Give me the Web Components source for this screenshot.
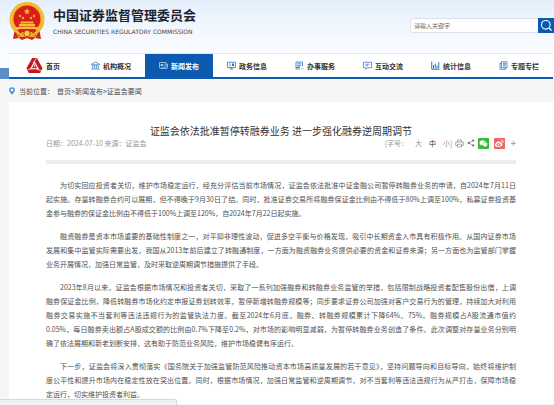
<!DOCTYPE html>
<html lang="zh-CN">
<head>
<meta charset="utf-8">
<title>证监会要闻</title>
<style>
    * { box-sizing: border-box; }
    body {
        margin: 0;
        min-height: 100vh;
        background: #f6f6f6;
        color: #505050;
        font: 7px/14px "Noto Sans CJK SC", "Noto Sans", sans-serif;
    }
</style>
</head>
<body>
<site-header></site-header>
<site-nav></site-nav>
<bread-crumb></bread-crumb>
<news-article>
    <span slot="title">证监会依法批准暂停转融券业务 进一步强化融券逆周期调节</span>
    <span slot="meta">日期：2024-07-10 来源：证监会</span>
    <article-paragraph>为切实回应投资者关切，维护市场稳定运行，经充分评估当前市场情况，证监会依法批准中证金融公司暂停转融券业务的申请，自2024年7月11日<br>起实施。存量转融券合约可以展期，但不得晚于9月30日了结。同时，批准证券交易所将融券保证金比例由不得低于80%上调至100%，私募证券投资基<br>金参与融券的保证金比例由不得低于100%上调至120%，自2024年7月22日起实施。</article-paragraph>
    <article-paragraph>融资融券是资本市场重要的基础性制度之一，对平抑非理性波动，促进多空平衡与价格发现，吸引中长期资金入市具有积极作用。从国内证券市场<br>发展和集中监管实际需要出发，我国从2013年前后建立了转融通制度，一方面为融资融券业务提供必要的资金和证券来源；另一方面也为监管部门掌握<br>业务开展情况，加强日常监管，及时采取逆周期调节措施提供了手段。</article-paragraph>
    <article-paragraph>2023年8月以来，证监会根据市场情况和投资者关切，采取了一系列加强融券和转融券业务监管的举措，包括限制战略投资者配售股份出借，上调<br>融券保证金比例，降低转融券市场化约定申报证券划转效率，暂停新增转融券规模等；同步要求证券公司加强对客户交易行为的管理，持续加大对利用<br>融券交易实施不当套利等违法违规行为的监管执法力度。截至2024年6月底，融券、转融券规模累计下降64%、75%。融券规模占A股流通市值约<br>0.05%，每日融券卖出额占A股成交额的比例由0.7%下降至0.2%，对市场的影响明显减弱，为暂停转融券业务创造了条件。此次调整对存量业务分别明<br>确了依法展期和新老划断安排，这有助于防范业务风险，维护市场稳健有序运行。</article-paragraph>
    <article-paragraph>下一步，证监会将深入贯彻落实《国务院关于加强监管防范风险推动资本市场高质量发展的若干意见》，坚持问题导向和目标导向，始终将维护制<br>度公平性和提升市场内在稳定性放在突出位置。同时，根据市场情况，加强日常监管和逆周期调节，对不当套利等违法违规行为从严打击，保障市场稳<br>定运行，切实维护投资者利益。</article-paragraph>
</news-article>
<status-bar></status-bar>

<script>
const icons = {
    csrc: `<path d="M6.500 1h5L17.500 12l-2.500 5H3L.500 12z" fill="#c8161d"/><path d="M9 5.500 12.800 12.500H5.200z" fill="#c8161d" stroke="#fff" stroke-width="1.200"/><path d="M9 8v3M11 1.500 7.500 6M16.500 14.500l-5-1.500M2 13.500l4.500-1.500" stroke="#fff" stroke-width=".8"/>`,
    bank: `<path d="M1 6.500 9 2l8 4.500v1H1zM3.500 8v7M7.200 8v7M10.800 8v7M14.500 8v7M1 16h16" fill="none" stroke="currentColor" stroke-width="1.500"/>`,
    news: `<path d="M1 3h13v12H3q-2 0-2-2zM14 6h3v7q0 2-2 2" fill="none" stroke="currentColor" stroke-width="1.500"/><path d="M3.500 6h4v4h-4z" fill="currentColor"/><path d="M9 6.500h3.500M9 9.500h3.500M3.500 12.500h9" stroke="currentColor" stroke-width="1.200"/>`,
    screen: `<path d="M1 2.500h16v10.500H1zM5 16h8M9 13v3" fill="none" stroke="currentColor" stroke-width="1.600"/><path d="M4 6h4M4 9.500h4" stroke="currentColor" stroke-width="1.300"/><path d="M10 5h4v5h-4z" fill="currentColor"/>`,
    form: `<path d="M15 10V2H2v14h8M4.500 5.500h8M4.500 8.500h8M4.500 11.500h5M2 13h8M11.500 15.500h1.500M14.500 15.500h2" fill="none" stroke="currentColor" stroke-width="1.600"/>`,
    chat: `<path d="M1 2.500h16v11H9L5.500 16.500v-3H1zM5 6.500h8M5 9.500h5" fill="none" stroke="currentColor" stroke-width="1.500"/>`,
    chart: `<path d="M1.500 1v15.500H17M5 15V8M8.500 15V5M12 15V9M15.500 15V2" fill="none" stroke="currentColor" stroke-width="2"/>`,
    topic: `<path d="M5 1.500h11v12H5zM5 4H2v12.500h11v-3M8 5h5.500M8 7.500h5.500M8 10h5.500" fill="none" stroke="currentColor" stroke-width="1.600"/>`,
    pin: `<path d="M9 17.500C6 13.500 2.500 10.500 2.500 7a6.500 6.500 0 0 1 13 0c0 3.500-3.500 6.500-6.500 10.500z" fill="#4c8fd2"/><circle cx="9" cy="7" r="3" fill="#fff"/>`,
    search: `<circle cx="8" cy="8" r="6" fill="none" stroke="#fff" stroke-width="1.500"/><path d="M12.500 12.500 16 16" stroke="#fff" stroke-width="1.700"/>`,
    print: `<path d="M5 6V2h8v4M5 13H1.500V6h15v7H13M5 10.500h8V16H5z" fill="none" stroke="#888" stroke-width="1.400"/>`,
    share: `<path d="M14 3.500 4 9l10 5.500" fill="none" stroke="#777" stroke-width="1.400"/><g fill="#777"><circle cx="14" cy="3.500" r="2.600"/><circle cx="4" cy="9" r="2.600"/><circle cx="14" cy="14.500" r="2.600"/></g>`,
    wechat: `<rect width="18" height="18" rx="1" fill="#3eb83b"/><path d="M7.500 3.500c-3 0-5 1.900-5 4.200 0 1.300.7 2.400 1.800 3.200l-.5 1.600 2-1c3.600.6 6.700-1 6.700-3.800 0-2.300-2.200-4.200-5-4.200z" fill="#fff"/><path d="M11.700 7c-2.400 0-4.200 1.600-4.200 3.600 0 2.400 2.400 4 5.200 3.400l1.600.9-.4-1.400c3.400-2.600 1.400-6.500-2.200-6.500z" fill="#fff" stroke="#3eb83b" stroke-width=".6"/><path d="M5.500 6.500h1M9 6.500h1M10.300 9.800h.8M13 9.800h.8" stroke="#3eb83b"/>`,
    weibo: `<rect width="18" height="18" rx="1" fill="#f16b61"/><path d="M8 5.500c1 .2.900 1.200.7 2 2-.8 4-.6 3.400 1.100 4 1.400 1 6-4.700 6C.5 14.500.500 10 4.500 7c1.500-1.200 2.700-1.700 3.500-1.500z" fill="#fff"/><ellipse cx="7.300" cy="11" rx="3.300" ry="2.300" fill="#f16b61"/><circle cx="7" cy="11.200" r="1.200" fill="#fff"/><path d="M11 3.500c3-.7 5 1.500 4.200 4.300M11.300 5.800c1.500-.3 2.200.6 1.900 1.700" fill="none" stroke="#fff" stroke-width="1.100"/>`
};

function icon(name, size) {
    return `<svg viewBox="0 0 18 18" width="${size}" height="${size}" aria-hidden="true">${icons[name]}</svg>`;
}

const baseStyle = `
    * { box-sizing: border-box; }
    svg { display: block; flex: none; }
    a { color: inherit; text-decoration: none; }
    button { padding: 0; border: 0; background: none; color: inherit; font: inherit; cursor: pointer; }
`;

class SiteHeader extends HTMLElement {
    constructor() {
        super();
        this.attachShadow({ mode: 'open' }).innerHTML = `
            <style>
                ${baseStyle}
                :host {
                    display: flex;
                    justify-content: space-between;
                    align-items: flex-start;
                    height: 53px;
                    padding-left: 9px;
                    background: linear-gradient(#e4effb, #f8fbff 80%);
                }
                .brand { display: flex; gap: 8px; padding-top: 2px; color: #1b2230; }
                .name { padding-top: 3px; }
                strong { display: block; font-size: 13px; line-height: 20px; font-weight: 700; }
                small {
                    display: block;
                    font: 6px/14px "DejaVu Sans", sans-serif;
                    color: #444;
                }
                form { display: flex; margin-top: 18px; }
                input {
                    width: 128px;
                    height: 15px;
                    padding: 0 3px;
                    border: 1px solid #dde2e8;
                    border-right: 0;
                    border-radius: 2px 0 0 2px;
                    background: #fff;
                    font: inherit;
                    font-size: 6px;
                    color: #444;
                }
                input::placeholder { color: #666; }
                button {
                    display: grid;
                    place-items: center;
                    width: 16px;
                    height: 15px;
                    background: #0b5ab0;
                }
            </style>
            <a class="brand" href="#">
                <svg viewBox="0 0 36 39" width="36" height="39" aria-hidden="true">
                    <path d="M6 26h24l2 11-6-1-3 2-5-2-5 2-3-2-6 1z" fill="#d3271d"/>
                    <circle cx="18" cy="17.500" r="17.500" fill="#efb52c"/>
                    <circle cx="18" cy="17.500" r="15.800" fill="none" stroke="#f8cf4b" stroke-dasharray="2 1"/>
                    <circle cx="18" cy="17" r="13.500" fill="#d91f17"/>
                    <path d="m18 6 .9 2.400h2.500l-2 1.600.7 2.500-2.100-1.500-2.100 1.500.7-2.500-2-1.600h2.500z" fill="#f5bf38"/>
                    <g fill="#f0ad32"><circle cx="11" cy="14" r="1.200"/><circle cx="14" cy="16" r="1.200"/><circle cx="22" cy="16" r="1.200"/><circle cx="25" cy="14" r="1.200"/></g>
                    <path d="M12 19.500h12l1 2H11zM10 22h16v2.500H10zM7 25h22v2H7z" fill="#f6bd3c"/>
                    <path d="M8 28h20l-4 4H12z" fill="#d3271d"/>
                    <path d="M13 30h10l3 5h-4l-4-2-4 2h-4z" fill="#efae2a"/>
                    <circle cx="18" cy="31.500" r="3.200" fill="#f7ca47" stroke="#cf3b1d"/>
                    <path d="M7 29l3 7M29 29l-3 7" stroke="#efae2a"/>
                </svg>
                <span class="name">
                    <strong>中国证券监督管理委员会</strong>
                    <small>CHINA SECURITIES REGULATORY COMMISSION</small>
                </span>
            </a>
            <form>
                <input type="text" placeholder="请输入关键字" aria-label="请输入关键字">
                <button type="button" aria-label="搜索">${icon('search', 13)}</button>
            </form>
        `;
    }
}

class SiteNav extends HTMLElement {
    constructor() {
        super();
        const items = [
            ['csrc', '首页'],
            ['bank', '机构概况'],
            ['news', '新闻发布'],
            ['screen', '政务信息'],
            ['form', '办事服务'],
            ['chat', '互动交流'],
            ['chart', '统计信息'],
            ['topic', '专题专栏']
        ];
        const links = items.map(([name, label]) => `
            <a href="#" class="${name}">${icon(name, name === 'csrc' ? 17 : 9)}<span>${label}</span></a>
        `).join('');

        this.attachShadow({ mode: 'open' }).innerHTML = `
            <style>
                ${baseStyle}
                :host {
                    display: block;
                    padding: 0 1px 0 9px;
                    background: linear-gradient(#5b8ec7, #5b8ec7) left bottom / 9px 11px no-repeat, #f8fbff;
                }
                nav {
                    display: grid;
                    grid-template-columns: repeat(8, 1fr);
                    height: 26px;
                    border: 1px solid #e3e6e9;
                    border-bottom: 2px solid #0b5ab0;
                    border-right-width: 0;
                    border-left-width: 0;
                    background: #fff;
                }
                a {
                    display: flex;
                    justify-content: center;
                    align-items: center;
                    gap: 3px;
                    color: #333;
                    font-weight: 700;
                }
                svg { color: #2f76c2; }
                .news { background: #0b5ab0; color: #fff; }
                .news svg { color: #b9d6f2; }
            </style>
            <nav>${links}</nav>
        `;
    }
}

class BreadCrumb extends HTMLElement {
    constructor() {
        super();
        this.attachShadow({ mode: 'open' }).innerHTML = `
            <style>
                ${baseStyle}
                :host {
                    display: flex;
                    align-items: center;
                    gap: 3px;
                    height: 23px;
                    padding-left: 8px;
                }
            </style>
            ${icon('pin', 8)}
            <span>当前位置：</span>
            <span><a href="#">首页</a>&gt;<a href="#">新闻发布</a>&gt;<a href="#">证监会要闻</a></span>
        `;
    }
}

class NewsArticle extends HTMLElement {
    constructor() {
        super();
        this.attachShadow({ mode: 'open' }).innerHTML = `
            <style>
                ${baseStyle}
                :host {
                    display: block;
                    margin-left: 9px;
                    padding: 22px 38px 3px 37px;
                    background: #fff;
                }
                h1 {
                    margin: 0;
                    color: #333;
                    font-size: 10px;
                    line-height: 14px;
                    font-weight: 400;
                    text-align: center;
                }
                .info {
                    display: flex;
                    justify-content: space-between;
                    align-items: center;
                    height: 10px;
                    color: #999;
                }
                .tools { display: flex; align-items: center; gap: 3px; }
                .sizes { display: flex; gap: 7px; }
                .sizes .on { color: #333; }
                .social { display: flex; gap: 5px; align-items: center; }
                .more { font-size: 10px; }
                hr {
                    height: 4px;
                    margin: 12px 0 14px;
                    border: 0;
                    background: #eee;
                }
                .text { display: grid; gap: 9px; }
            </style>
            <article>
                <h1><slot name="title"></slot></h1>
                <div class="info">
                    <slot name="meta"></slot>
                    <div class="tools">
                        <div class="sizes">
                            <span>[字号：</span>
                            <button type="button">大</button>
                            <button type="button" class="on">中</button>
                            <span><button type="button">小</button>]</span>
                        </div>
                        <button type="button" aria-label="打印">${icon('print', 9)}</button>
                        <button type="button" aria-label="分享">${icon('share', 8)}</button>
                        <div class="social">
                            <button type="button" aria-label="微信">${icon('wechat', 11)}</button>
                            <button type="button" aria-label="微博">${icon('weibo', 11)}</button>
                            <button type="button" class="more">+</button>
                        </div>
                    </div>
                </div>
                <hr>
                <div class="text"><slot></slot></div>
            </article>
        `;
    }
}

class ArticleParagraph extends HTMLElement {
    connectedCallback() {
        this.attachShadow({ mode: 'open' }).innerHTML = `
            <style>
                :host { display: block; }
                p { margin: 0; text-indent: 2em; text-align: justify; text-align-last: justify; }
                /* the closing line keeps its own width */
                p + p { text-indent: 0; text-align-last: left; }
            </style>
            <p></p><p></p>
        `;
        const [body, closing] = this.shadowRoot.querySelectorAll('p');
        const lines = this.innerHTML.split('<br>');
        closing.textContent = lines.pop();
        body.innerHTML = lines.join('<br>');
    }
}

class StatusBar extends HTMLElement {
    constructor() {
        super();
        this.attachShadow({ mode: 'open' }).innerHTML = `
            <style>
                :host {
                    position: fixed;
                    left: 0;
                    bottom: 0;
                    width: 32%;
                    height: 6px;
                    border: 1px solid #d8d8d8;
                    border-width: 1px 1px 0 0;
                    border-radius: 0 2px 0 0;
                    background: #f2f2f2;
                }
            </style>
        `;
    }
}

customElements.define('site-header', SiteHeader);
customElements.define('site-nav', SiteNav);
customElements.define('bread-crumb', BreadCrumb);
customElements.define('news-article', NewsArticle);
customElements.define('article-paragraph', ArticleParagraph);
customElements.define('status-bar', StatusBar);
</script>
</body>
</html>
